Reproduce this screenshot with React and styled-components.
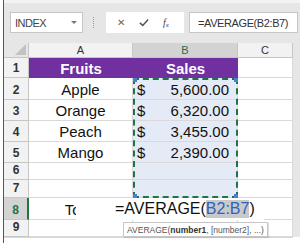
import styled, { createGlobalStyle } from 'styled-components'

const GlobalStyle = createGlobalStyle`
  html, body { margin: 0; padding: 0; background: #ffffff; }
  body { font-family: "Liberation Sans", Arial, sans-serif; }
`

const green = '#217346'
const purple = '#7030a0'
const gridLine = '#d9d9d9'
const headBorder = '#c6c6c6'

const fruits = [
  { name: 'Apple', sales: '5,600.00' },
  { name: 'Orange', sales: '6,320.00' },
  { name: 'Peach', sales: '3,455.00' },
  { name: 'Mango', sales: '2,390.00' },
]

const rowHeights = [15, 20, 22, 21, 21, 21, 17, 18, 22, 17]

export default function App() {
  return (
    <>
      <GlobalStyle />
      <Window>
        <FormulaBar>
          <NameBox>
            INDEX
            <Caret />
          </NameBox>
          <Grip />
          <Buttons>
            <span>✕</span>
            <Check viewBox="0 0 12 10"><path d="M1 5.5 L4.5 8.5 L11 1.5" /></Check>
            <Fx>f<sub>x</sub></Fx>
          </Buttons>
          <FormulaInput>=AVERAGE(B2:B7)</FormulaInput>
        </FormulaBar>
        <SheetWrap>
          <Sheet style={{ gridTemplateRows: rowHeights.map((h) => h + 'px').join(' ') }}>
            <Corner><Tri /></Corner>
            <ColHead>A</ColHead>
            <ColHead $active>B</ColHead>
            <ColHead>C</ColHead>

            <RowHead>1</RowHead>
            <TitleCell>Fruits</TitleCell>
            <TitleCell>Sales</TitleCell>
            <Cell />

            {fruits.map((f, i) => (
              <Row key={f.name} n={i + 2} name={f.name} sales={f.sales} />
            ))}

            <RowHead>6</RowHead>
            <Cell />
            <Cell $sel />
            <Cell />

            <RowHead>7</RowHead>
            <Cell />
            <Cell $sel />
            <Cell />

            <RowHead $active>8</RowHead>
            <Cell $center>Total</Cell>
            <Cell />
            <Cell />

            <RowHead>9</RowHead>
            <Cell />
            <Cell />
            <Cell />

            <Range>
              <Handle style={{ left: -2, top: -2 }} />
              <Handle style={{ right: -2, top: -2 }} />
              <Handle style={{ left: -2, bottom: -2 }} />
              <Handle style={{ right: -2, bottom: -2 }} />
            </Range>
            <EditBox>
              =AVERAGE(<Ref>B2:B7</Ref>)
            </EditBox>
            <Tip>
              AVERAGE(<b>number1</b>, [number2], ...)
            </Tip>
          </Sheet>
          <RightEdge />
        </SheetWrap>
      </Window>
    </>
  )
}

const Row = ({ n, name, sales }) => (
  <>
    <RowHead>{n}</RowHead>
    <Cell $center>{name}</Cell>
    <Cell $sel>
      <Money>
        <span>$</span>
        <span>{sales}</span>
      </Money>
    </Cell>
    <Cell />
  </>
)

const Window = styled.div`
  width: 297px;
  height: 243px;
  margin-left: 3px;
  border-left: 1px solid ${green};
  display: flex;
  flex-direction: column;
  overflow: hidden;
  background: #ffffff;
`

const FormulaBar = styled.div`
  height: 43px;
  box-sizing: border-box;
  background: #e6e6e6;
  border-top: 3px solid #f3f3f3;
  display: flex;
  align-items: center;
  padding: 0 3px 1px 6px;
  gap: 0;
`

const NameBox = styled.div`
  width: 73px;
  height: 21px;
  box-sizing: border-box;
  background: #fff;
  border: 1px solid ${headBorder};
  font-size: 11px;
  letter-spacing: -0.5px;
  color: #444;
  display: flex;
  align-items: center;
  justify-content: space-between;
  padding: 0 5px 0 4px;
`

const Caret = styled.span`
  width: 0;
  height: 0;
  border-left: 3px solid transparent;
  border-right: 3px solid transparent;
  border-top: 3px solid #777;
`

const Grip = styled.div`
  width: 1px;
  height: 11px;
  margin: 0 11px 0 10px;
  border-left: 1px dotted #9a9a9a;
`

const Buttons = styled.div`
  width: 78px;
  height: 21px;
  box-sizing: border-box;
  background: #fff;
  display: flex;
  align-items: center;
  gap: 14px;
  padding-left: 11px;
  color: #666;
  font-size: 10px;
`

const Check = styled.svg`
  width: 10px;
  height: 9px;
  fill: none;
  stroke: #555;
  stroke-width: 1.8;
`

const Fx = styled.span`
  font-family: "Liberation Serif", serif;
  font-style: italic;
  font-size: 10px;
  color: #444;
  sub { font-size: 7px; vertical-align: -1px; }
`

const FormulaInput = styled.div`
  margin-left: 5px;
  flex: 1;
  height: 21px;
  box-sizing: border-box;
  background: #fff;
  border: 1px solid ${headBorder};
  font-size: 11px;
  letter-spacing: -0.4px;
  color: #333;
  display: flex;
  align-items: center;
  padding-left: 8px;
`

const SheetWrap = styled.div`
  display: flex;
  flex: 1;
`

const Sheet = styled.div`
  position: relative;
  display: grid;
  grid-template-columns: 25px 104px 105px 55px;
  align-content: start;
  border-bottom: 1px solid ${gridLine};
  height: fit-content;
`

const RightEdge = styled.div`
  width: 7px;
  background: #e6e6e6;
  height: 194px;
`

const Corner = styled.div`
  background: #e6e6e6;
  border-right: 1px solid ${headBorder};
  border-bottom: 1px solid ${headBorder};
  position: relative;
`

const Tri = styled.div`
  position: absolute;
  right: 2px;
  bottom: 2px;
  width: 0;
  height: 0;
  border-left: 11px solid transparent;
  border-bottom: 11px solid #c2c2c2;
`

const ColHead = styled.div`
  background: ${(p) => (p.$active ? '#d3d3d3' : '#f2f2f2')};
  color: ${(p) => (p.$active ? green : '#333')};
  border-right: 1px solid ${headBorder};
  border-bottom: 1px solid ${headBorder};
  font-size: 11px;
  display: flex;
  align-items: center;
  justify-content: center;
`

const RowHead = styled.div`
  background: ${(p) => (p.$active ? '#d3d3d3' : '#f2f2f2')};
  color: ${(p) => (p.$active ? green : '#333')};
  border-right: ${(p) => (p.$active ? `2px solid ${green}` : `1px solid ${headBorder}`)};
  border-bottom: 1px solid ${headBorder};
  font-size: 12px;
  font-weight: bold;
  display: flex;
  align-items: flex-end;
  justify-content: center;
  padding-bottom: 2px;
  box-sizing: border-box;
`

const Cell = styled.div`
  background: ${(p) => (p.$sel ? '#e4ebf6' : '#fff')};
  border-right: 1px solid ${gridLine};
  border-bottom: 1px solid ${gridLine};
  font-size: 15px;
  color: #111;
  display: flex;
  align-items: flex-end;
  justify-content: ${(p) => (p.$center ? 'center' : 'flex-start')};
  padding-bottom: 1px;
  box-sizing: border-box;
  overflow: hidden;
`

const TitleCell = styled.div`
  background: ${purple};
  color: #fff;
  font-weight: bold;
  font-size: 15px;
  display: flex;
  align-items: flex-end;
  justify-content: center;
  padding-bottom: 1px;
  box-sizing: border-box;
`

const Money = styled.div`
  width: 100%;
  display: flex;
  justify-content: space-between;
  padding: 0 8px 0 4px;
`

const Range = styled.div`
  position: absolute;
  left: 129px;
  top: 35px;
  width: 105px;
  height: 120px;
  box-sizing: border-box;
  border: 2px dashed ${green};
  pointer-events: none;
`

const Handle = styled.span`
  position: absolute;
  width: 4px;
  height: 4px;
  background: #4a7fd6;
`

const EditBox = styled.div`
  position: absolute;
  left: 72px;
  top: 155px;
  width: 188px;
  height: 22px;
  background: #fff;
  font-size: 16px;
  color: #111;
  display: flex;
  align-items: center;
  padding-left: 39px;
  box-sizing: border-box;
  white-space: nowrap;
`

const Ref = styled.span`
  color: #2f62c0;
  background: #c9c9c9;
`

const Tip = styled.div`
  position: absolute;
  left: 119px;
  top: 179px;
  height: 13px;
  background: #fff;
  border: 1px solid #c6c6c6;
  box-shadow: 1px 1px 1px rgba(0,0,0,0.12);
  font-size: 8.5px;
  color: #555;
  padding: 0 3px;
  display: flex;
  align-items: center;
  white-space: nowrap;
  b { color: #333; }
`
